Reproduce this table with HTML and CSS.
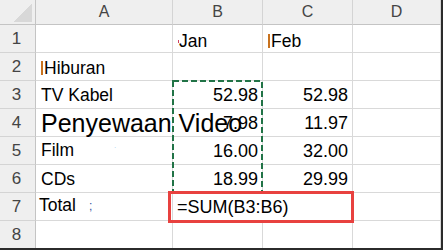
FILE: index.html
```html
<!DOCTYPE html>
<html>
<head>
<meta charset="utf-8">
<link rel="stylesheet" href="styles.css">
</head>
<body>
<div class="sheet">
  <div class="grid">
    <div class="corner"><span class="tri"></span></div>
    <div class="colhdr">A</div>
    <div class="colhdr">B</div>
    <div class="colhdr">C</div>
    <div class="colhdr">D</div>

    <div class="rowhdr">1</div>
    <div class="cell r1"></div>
    <div class="cell r1"><span class="tick red"></span>Jan</div>
    <div class="cell r1"><span class="bar"></span>Feb</div>
    <div class="cell r1"></div>

    <div class="rowhdr">2</div>
    <div class="cell r2"><span class="bar"></span>Hiburan</div>
    <div class="cell r2"></div>
    <div class="cell r2"></div>
    <div class="cell r2"></div>

    <div class="rowhdr">3</div>
    <div class="cell">TV Kabel</div>
    <div class="cell num">52.98</div>
    <div class="cell num">52.98</div>
    <div class="cell"></div>

    <div class="rowhdr">4</div>
    <div class="cell big">Penyewaan Video</div>
    <div class="cell num">7.98</div>
    <div class="cell num">11.97</div>
    <div class="cell"></div>

    <div class="rowhdr">5</div>
    <div class="cell r5">Film<span class="dot">.</span></div>
    <div class="cell num">16.00</div>
    <div class="cell num">32.00</div>
    <div class="cell"></div>

    <div class="rowhdr">6</div>
    <div class="cell">CDs</div>
    <div class="cell num">18.99</div>
    <div class="cell num">29.99</div>
    <div class="cell"></div>

    <div class="rowhdr">7</div>
    <div class="cell r7">Total<span class="semi">;</span></div>
    <div class="cell formula">=SUM(B3:B6)</div>
    <div class="cell"></div>
    <div class="cell"></div>

    <div class="rowhdr last">8</div>
    <div class="cell last"></div>
    <div class="cell last"></div>
    <div class="cell last"></div>
    <div class="cell last"></div>
  </div>
  <svg class="marquee" width="92" height="114" viewBox="0 0 92 114">
    <rect x="1" y="1" width="89" height="112" fill="none" stroke="#217346" stroke-width="2" stroke-dasharray="6 3"/>
  </svg>
  <div class="redbox"></div>
</div>
</body>
</html>
```

FILE: styles.css
```css
html, body {
  margin: 0;
  padding: 0;
  background: #ffffff;
}

.sheet {
  position: relative;
  width: 441px;
  height: 248px;
  border-right: 2px solid #2b2b2b;
  border-bottom: 2px solid #2b2b2b;
  overflow: hidden;
  font-family: "Liberation Sans", Arial, sans-serif;
  color: #000;
}

.grid {
  display: grid;
  grid-template-columns: 36px 137px 90px 90px 88px;
  grid-template-rows: 25px repeat(7, 28px) 27px;
}

.corner {
  position: relative;
  background: #efefef;
  border-right: 1px solid #c4c4c4;
  border-bottom: 1px solid #c4c4c4;
}

.tri {
  position: absolute;
  right: 3px;
  bottom: 2px;
  width: 18px;
  height: 19px;
  background: linear-gradient(to top left, #d8d8d8 50%, transparent 50%);
}

.colhdr {
  background: #efefef;
  border-right: 1px solid #d4d4d4;
  border-bottom: 1px solid #c4c4c4;
  color: #444;
  font-size: 16px;
  display: flex;
  align-items: center;
  justify-content: center;
}

.rowhdr {
  background: #efefef;
  border-right: 1px solid #c4c4c4;
  border-bottom: 1px solid #d4d4d4;
  color: #444;
  font-size: 17px;
  line-height: 20px;
  display: flex;
  align-items: flex-end;
  justify-content: center;
  padding-bottom: 3px;
  padding-right: 2px;
}

.rowhdr.last {
  border-bottom: none;
}

.cell {
  position: relative;
  border-right: 1px solid #d9d9d9;
  border-bottom: 1px solid #d9d9d9;
  font-size: 17.5px;
  line-height: 20px;
  white-space: nowrap;
  display: flex;
  align-items: flex-end;
  padding: 0 4px 3px 5px;
  overflow: visible;
}

.cell.last {
  border-bottom: none;
}

.r1 { padding-bottom: 1px; }
.r2 { padding-bottom: 2px; }
.r5 { padding-bottom: 4px; }
.r7 { padding-bottom: 5px; padding-left: 3px; }

.num {
  justify-content: flex-end;
  font-size: 18px;
  padding-bottom: 3px;
}

.big {
  font-size: 25px;
  line-height: 25px;
  padding-bottom: 0;
  z-index: 2;
}

.formula {
  font-size: 18px;
  padding-left: 4px;
  padding-bottom: 3px;
  border-right-color: transparent;
  z-index: 3;
}

.bar {
  display: inline-block;
  width: 2px;
  height: 14px;
  margin-right: 1px;
  margin-bottom: 3px;
  background: #c8721e;
  align-self: flex-end;
}

.tick {
  display: inline-block;
  width: 1px;
  height: 3px;
  margin-bottom: 8px;
  background: #d04060;
}

.dot {
  color: #a8d0f0;
  font-size: 8px;
  margin-left: 40px;
  margin-bottom: 4px;
}

.semi {
  color: #3050a0;
  font-size: 12px;
  margin-left: 13px;
  margin-bottom: -1px;
}

.marquee {
  position: absolute;
  left: 172px;
  top: 80px;
  z-index: 4;
}

.redbox {
  position: absolute;
  left: 168px;
  top: 191px;
  width: 180px;
  height: 26px;
  border: 3px solid #e8413f;
  z-index: 5;
}
```
